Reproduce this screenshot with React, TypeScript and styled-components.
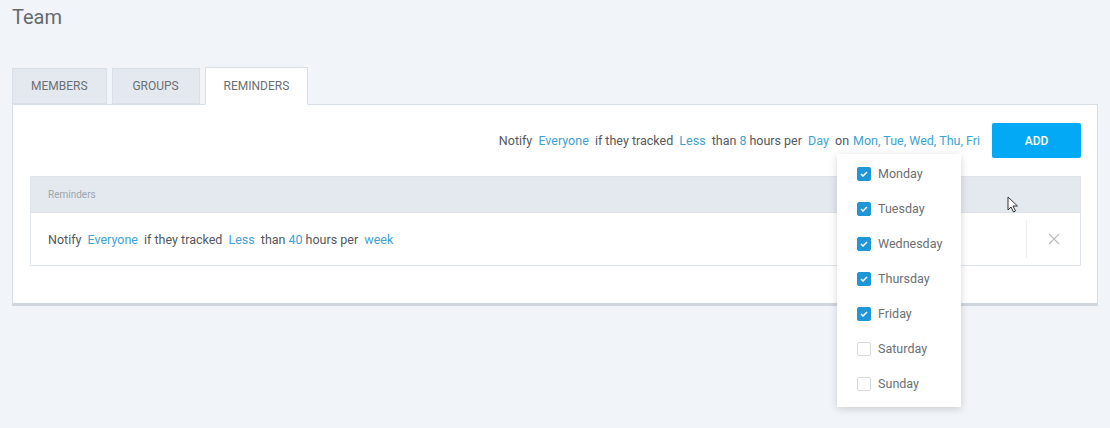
import styled, {createGlobalStyle} from 'styled-components';

const GlobalStyle = createGlobalStyle`
	html, body {
		margin: 0;
		min-height: 100vh;
		background: #f1f4f8;
		font-family: Roboto, 'Liberation Sans', sans-serif;
	}
`;

const Page = styled.div`
	padding: 6px 12px 0 12px;
	width: 1086px;
	min-height: 428px;
	box-sizing: content-box;
`;

const Title = styled.h1`
	margin: 0;
	font-size: 20px;
	font-weight: 400;
	color: #666a6f;
	height: 38px;
	line-height: 22px;
`;

const TabBar = styled.div`
	display: flex;
	gap: 5px;
	margin-top: 24px;
	position: relative;
	z-index: 1;
	margin-bottom: -1px;
`;

const Tab = styled.div<{$active?: boolean}>`
	height: ${(p) => (p.$active ? '38px' : '36px')};
	margin-top: ${(p) => (p.$active ? '-1px' : '0')};
	padding: 0 18px;
	min-width: 88px;
	display: flex;
	align-items: center;
	justify-content: center;
	box-sizing: border-box;
	font-size: 12px;
	color: #6b6f74;
	background: ${(p) => (p.$active ? '#ffffff' : '#e4e9ef')};
	border: 1px solid #d9dfe6;
	border-bottom: ${(p) => (p.$active ? '1px solid #ffffff' : '1px solid #d9dfe6')};
`;

const Panel = styled.div`
	background: #fff;
	border: 1px solid #d9dfe6;
	border-bottom: 3px solid #cfd6dd;
	padding: 18px 16px 37px 17px;
	position: relative;
`;

const Toolbar = styled.div`
	display: flex;
	justify-content: flex-end;
	align-items: center;
	gap: 12px;
	height: 35px;
`;

const Sentence = styled.div`
	font-size: 12.5px;
	color: #54585d;
	display: flex;
	align-items: center;
	white-space: pre;
`;

const Link = styled.span`
	color: #3ea2d2;
	padding: 0 3px;
`;

const DaysAnchor = styled.span`
	position: relative;
	color: #3ea2d2;
	margin-left: 4px;
`;

const AddButton = styled.button`
	width: 89px;
	height: 35px;
	border: none;
	border-radius: 2px;
	background: #03a9f4;
	color: #fff;
	font-family: Roboto, 'Liberation Sans', sans-serif;
	font-size: 12px;
	font-weight: 500;
`;

const Table = styled.div`
	margin-top: 18px;
	border: 1px solid #dfe4ea;
`;

const TableHead = styled.div`
	height: 35px;
	background: #e4e9ef;
	display: flex;
	align-items: center;
	padding-left: 17px;
	font-size: 10px;
	color: #9ba5af;
	border-bottom: 1px solid #dbe1e7;
`;

const Row = styled.div`
	height: 52px;
	display: flex;
	align-items: center;
`;

const RowText = styled(Sentence)`
	flex: 1;
	padding-left: 17px;
`;

const CloseCell = styled.div`
	width: 53px;
	height: 38px;
	border-left: 1px solid #eceff2;
	display: flex;
	align-items: center;
	justify-content: center;
`;

const Dropdown = styled.div`
	position: absolute;
	top: 21px;
	left: -16px;
	width: 124px;
	padding: 2px 0 6px;
	background: #fff;
	box-shadow: 0 2px 8px rgba(0, 0, 0, 0.16);
	z-index: 5;
`;

const DayItem = styled.div`
	height: 35px;
	display: flex;
	align-items: center;
	gap: 7px;
	padding-left: 20px;
	font-size: 12.5px;
	color: #6b6f74;
`;

const Box = styled.span<{$checked: boolean}>`
	width: 14px;
	height: 14px;
	box-sizing: border-box;
	border-radius: 2px;
	display: inline-flex;
	align-items: center;
	justify-content: center;
	background: ${(p) => (p.$checked ? '#1e96d7' : '#fff')};
	border: 1px solid ${(p) => (p.$checked ? '#1e96d7' : '#d7dce1')};
`;

const Cursor = styled.svg`
	position: absolute;
	left: 994px;
	top: 91px;
	z-index: 6;
`;

const days: [string, boolean][] = [
	['Monday', true],
	['Tuesday', true],
	['Wednesday', true],
	['Thursday', true],
	['Friday', true],
	['Saturday', false],
	['Sunday', false],
];

export default function App() {
	return (
		<>
			<GlobalStyle />
			<Page>
				<Title>Team</Title>
				<TabBar>
					<Tab>MEMBERS</Tab>
					<Tab>GROUPS</Tab>
					<Tab $active>REMINDERS</Tab>
				</TabBar>
				<Panel>
					<Toolbar>
						<Sentence>
							Notify <Link>Everyone</Link> if they tracked <Link>Less</Link> than
							<Link>8</Link>hours per <Link>Day</Link> on
							<DaysAnchor>
								Mon, Tue, Wed, Thu, Fri
								<Dropdown>
									{days.map(([name, checked]) => (
										<DayItem key={name}>
											<Box $checked={checked}>
												{checked && (
													<svg width="8" height="6" viewBox="0 0 8 6">
														<path d="M1 3l2 2 4-4" fill="none" stroke="#fff" strokeWidth="1.5" />
													</svg>
												)}
											</Box>
											{name}
										</DayItem>
									))}
								</Dropdown>
							</DaysAnchor>
						</Sentence>
						<AddButton>ADD</AddButton>
					</Toolbar>
					<Table>
						<TableHead>Reminders</TableHead>
						<Row>
							<RowText>
								Notify <Link>Everyone</Link> if they tracked <Link>Less</Link> than
								<Link>40</Link>hours per <Link>week</Link>
							</RowText>
							<CloseCell>
								<svg width="12" height="12" viewBox="0 0 12 12">
									<path d="M1 1l10 10M11 1L1 11" stroke="#b8bdc2" strokeWidth="1.2" />
								</svg>
							</CloseCell>
						</Row>
					</Table>
					<Cursor width="12" height="17" viewBox="0 0 12 17">
						<path d="M1 1v13l3-3 2.5 5 2-1-2.5-5h4.5z" fill="#fff" stroke="#333" strokeWidth="1" />
					</Cursor>
				</Panel>
			</Page>
		</>
	);
}
